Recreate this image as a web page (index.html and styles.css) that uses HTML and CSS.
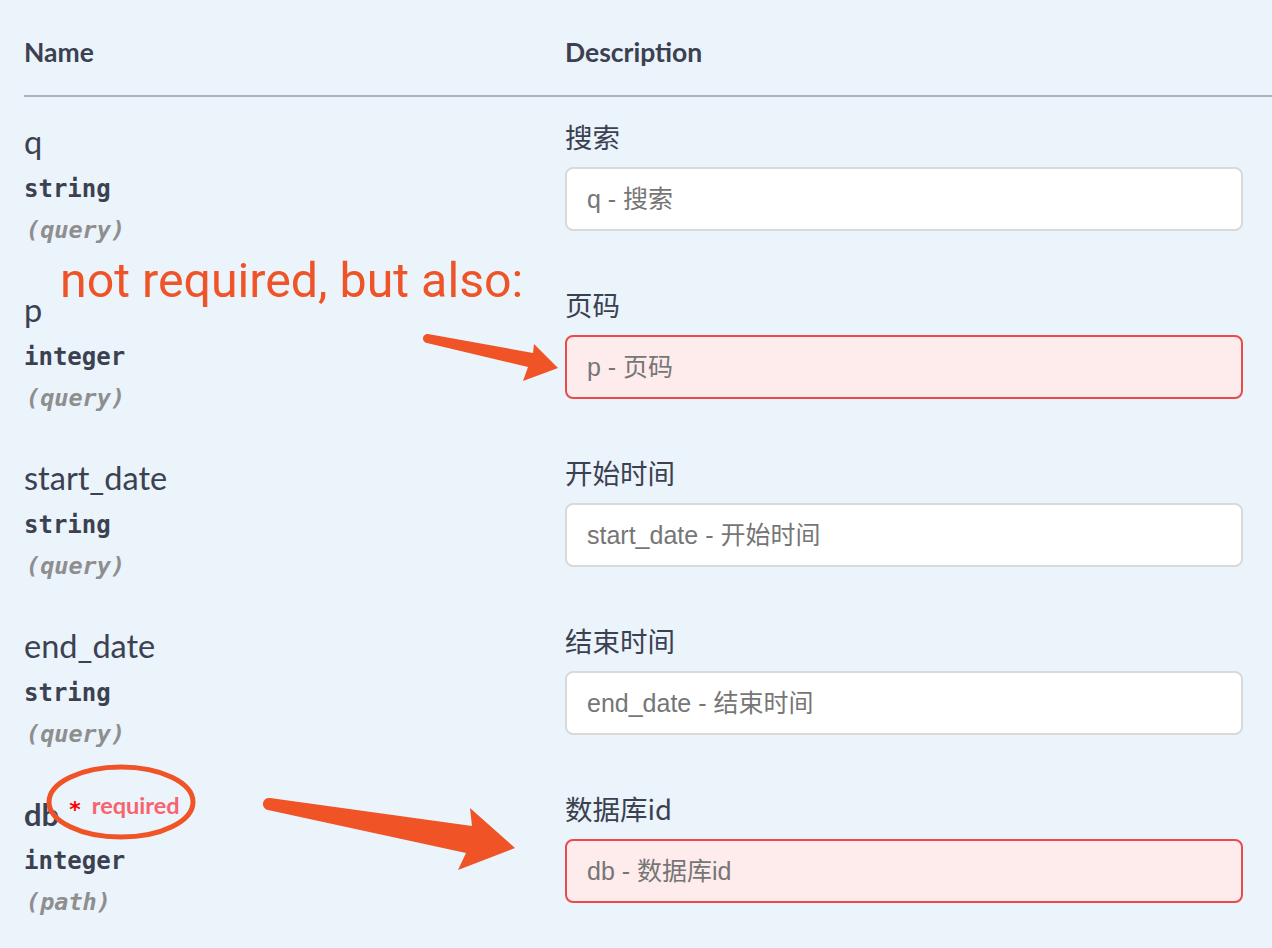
FILE: index.html
```html
<!DOCTYPE html>
<html lang="zh">
<head>
<meta charset="utf-8">
<title>Parameters</title>
<link rel="stylesheet" href="styles.css">
</head>
<body>
<div class="page">
  <div class="table">
    <div class="head">
      <div class="col-name">Name</div>
      <div class="col-desc">Description</div>
    </div>

    <div class="row">
      <div class="cell-name">
        <div class="pname">q</div>
        <div class="ptype">string</div>
        <div class="pin">(query)</div>
      </div>
      <div class="cell-desc">
        <div class="plabel">搜索</div>
        <input class="pinput" type="text" placeholder="q - 搜索">
      </div>
    </div>

    <div class="row">
      <div class="cell-name">
        <div class="pname">p</div>
        <div class="ptype">integer</div>
        <div class="pin">(query)</div>
      </div>
      <div class="cell-desc">
        <div class="plabel">页码</div>
        <input class="pinput invalid" type="text" placeholder="p - 页码">
      </div>
    </div>

    <div class="row">
      <div class="cell-name">
        <div class="pname">start_date</div>
        <div class="ptype">string</div>
        <div class="pin">(query)</div>
      </div>
      <div class="cell-desc">
        <div class="plabel">开始时间</div>
        <input class="pinput" type="text" placeholder="start_date - 开始时间">
      </div>
    </div>

    <div class="row">
      <div class="cell-name">
        <div class="pname">end_date</div>
        <div class="ptype">string</div>
        <div class="pin">(query)</div>
      </div>
      <div class="cell-desc">
        <div class="plabel">结束时间</div>
        <input class="pinput" type="text" placeholder="end_date - 结束时间">
      </div>
    </div>

    <div class="row">
      <div class="cell-name">
        <div class="pname required">db<span class="star">*</span><span class="req">required</span></div>
        <div class="ptype">integer</div>
        <div class="pin">(path)</div>
      </div>
      <div class="cell-desc">
        <div class="plabel">数据库id</div>
        <input class="pinput invalid" type="text" placeholder="db - 数据库id">
      </div>
    </div>
  </div>

  <div class="note">not required, but also:</div>
  <svg class="marks" width="1272" height="948" viewBox="0 0 1272 948" xmlns="http://www.w3.org/2000/svg">
    <path class="arrow" d="M428,334 L533,353 L534,344 L558,368 L523,381 L528,367 L427,343 A4.5,4.5 0 0 1 428,334 Z"/>
    <path class="arrow" d="M270,798 L472,826 L470,808 L515,848 L458,870 L466,853 L268,810 A6,6 0 0 1 270,798 Z"/>
    <ellipse class="ring" cx="121" cy="802" rx="72" ry="35"/>
  </svg>
</div>
</body>
</html>
```

FILE: styles.css
```css
html, body {
  margin: 0;
  padding: 0;
}

body {
  background: #ebf3fb;
  width: 1272px;
  height: 948px;
  overflow: hidden;
  font-family: "Lato", "Noto Sans CJK SC", sans-serif;
  color: #3b4151;
}

.page {
  position: relative;
  width: 1272px;
  height: 948px;
}

.table {
  margin-left: 24px;
}

.head {
  display: grid;
  grid-template-columns: 541px 1fr;
  padding: 32px 0 23px;
  border-bottom: 2px solid #aab2be;
  font-weight: 700;
  font-size: 26.5px;
  line-height: 40px;
}

.row {
  display: grid;
  grid-template-columns: 541px 678px;
  height: 168px;
  box-sizing: border-box;
  padding-top: 19px;
}

.cell-name {
  display: flex;
  flex-direction: column;
}

.pname {
  font-size: 32.5px;
  line-height: 52px;
  height: 52px;
  white-space: nowrap;
}

.pname.required {
  font-weight: 700;
  font-size: 31px;
}

.star {
  color: #ff0000;
  font-size: 22px;
  font-weight: 700;
  position: relative;
  top: -9px;
  margin-left: 10px;
  font-family: "DejaVu Sans", sans-serif;
}

.req {
  color: #f5646f;
  font-size: 23.5px;
  font-weight: 700;
  position: relative;
  top: -12px;
  margin-left: 11px;
}

.ptype {
  font-family: "DejaVu Sans Mono", monospace;
  font-weight: 700;
  font-size: 24px;
  line-height: 40px;
  margin-top: 1px;
}

.pin {
  font-family: "DejaVu Sans Mono", monospace;
  font-style: italic;
  font-weight: 700;
  font-size: 23.5px;
  line-height: 42px;
  color: #8e8e8e;
  margin-left: 2px;
}

.cell-desc {
  display: flex;
  flex-direction: column;
}

.plabel {
  font-family: "Noto Sans CJK SC", sans-serif;
  font-size: 27.5px;
  line-height: 40px;
  height: 40px;
  color: #3b4151;
}

.pinput {
  margin-top: 11px;
  width: 678px;
  height: 64px;
  box-sizing: border-box;
  border: 2px solid #d9d9d9;
  border-radius: 8px;
  background: #ffffff;
  padding: 0 20px;
  font-family: "Liberation Sans", "Noto Sans CJK SC", sans-serif;
  font-size: 25px;
  color: #3b4151;
  outline: none;
}

.pinput::placeholder {
  color: #767676;
  opacity: 1;
}

.pinput.invalid {
  border-color: #ec4a4a;
  background: #feebeb;
}

.note {
  position: absolute;
  left: 60px;
  top: 257px;
  font-family: "Roboto", sans-serif;
  font-size: 48.3px;
  line-height: 48px;
  color: #ee5427;
  white-space: nowrap;
}

.marks {
  position: absolute;
  left: 0;
  top: 0;
  pointer-events: none;
}

.arrow {
  fill: #ef5326;
}

.ring {
  fill: none;
  stroke: #ef5326;
  stroke-width: 5;
}
```
